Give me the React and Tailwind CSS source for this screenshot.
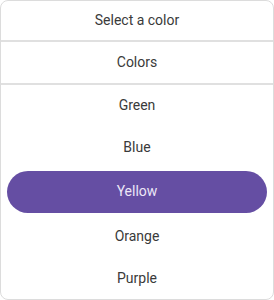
export default function App() {
  const items = ["Green", "Blue", "Yellow", "Orange", "Purple"]
  const selected = "Yellow"

  return (
    <div className="h-[300px] w-[274px] bg-white" style={{ fontFamily: "Roboto, 'Liberation Sans', sans-serif" }}>
      <div className="flex h-full flex-col overflow-hidden rounded-[8px] border border-[#dcdcdc] text-[14px] text-[#3a3a3a]">
        <div className="flex h-[41px] shrink-0 items-center justify-center border-b-2 border-[#e0e0e0]">
          Select a color
        </div>
        <div className="flex h-[43px] shrink-0 items-center justify-center border-b-2 border-[#e0e0e0]">
          Colors
        </div>
        <ul className="flex flex-1 flex-col">
          {items.map((item) =>
            item === selected ? (
              <li key={item} className="flex flex-1 items-center px-[6px] py-[3px]">
                <div className="flex h-full w-full items-center justify-center rounded-full bg-[#654ea3] text-[#ece6f7]">
                  {item}
                </div>
              </li>
            ) : (
              <li key={item} className="flex flex-1 items-center justify-center">
                {item}
              </li>
            )
          )}
        </ul>
      </div>
    </div>
  )
}
